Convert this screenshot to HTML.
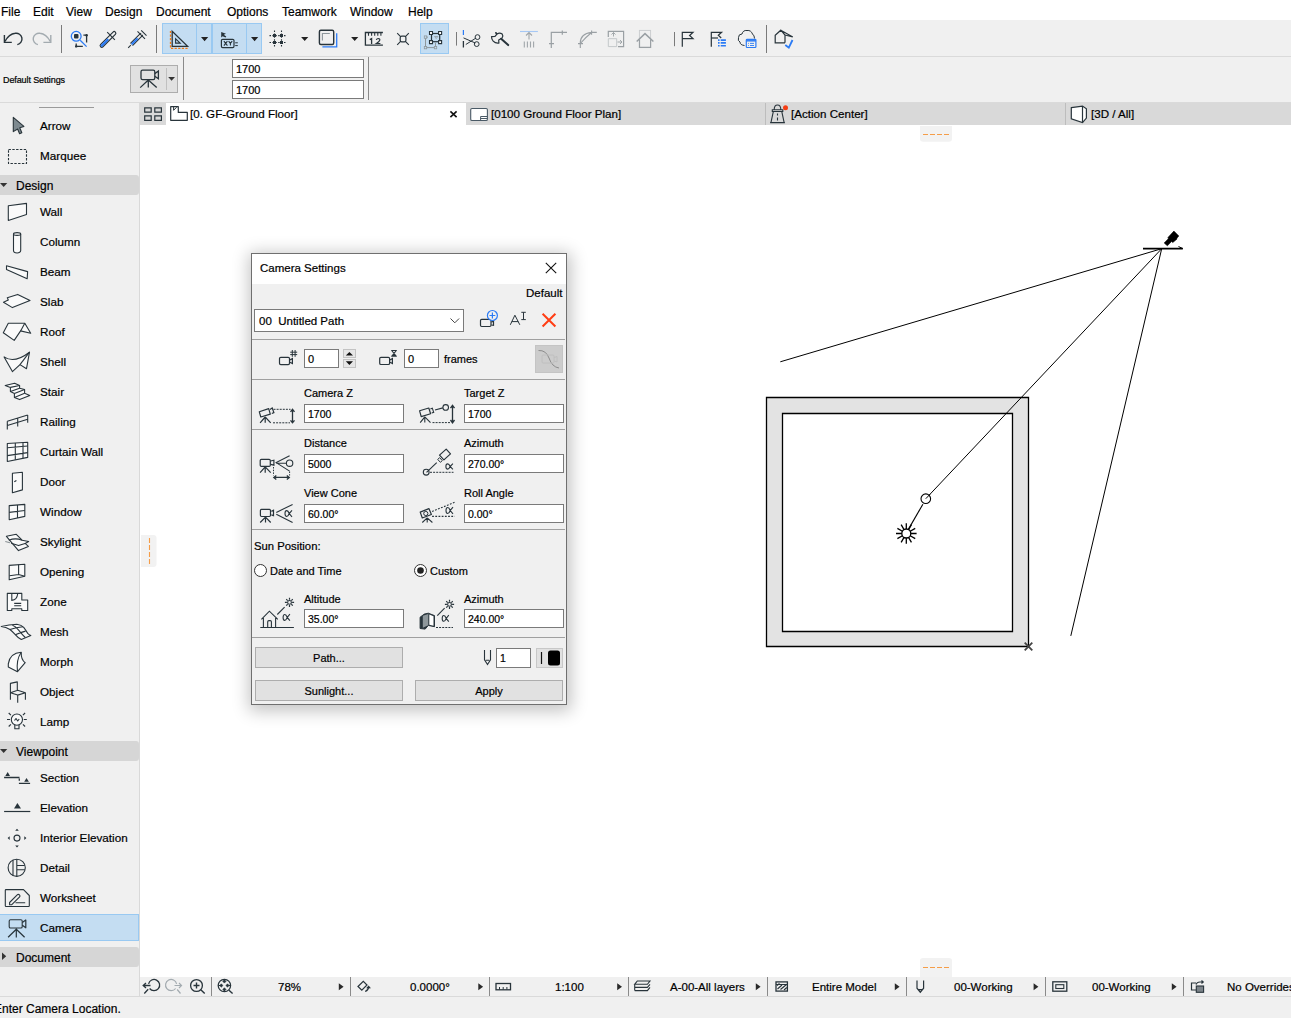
<!DOCTYPE html>
<html><head><meta charset="utf-8">
<style>
*{box-sizing:border-box;margin:0;padding:0}
html,body{width:1291px;height:1018px;overflow:hidden;background:#f0f0f0;font-family:"Liberation Sans",sans-serif;font-size:12px;color:#000;-webkit-text-stroke:0.2px #000}
.a{position:absolute}
.t{position:absolute;white-space:nowrap;line-height:14px}
svg{position:absolute;overflow:visible}
#menu{left:0;top:0;width:1291px;height:20px;background:#fff}
#tb{left:0;top:20px;width:1291px;height:37px;background:#f0f0f0;border-bottom:1px solid #dadada}
#info{left:0;top:57px;width:1291px;height:46px;background:#f0f0f0;border-bottom:1px solid #dadada}
#tool{left:0;top:103px;width:140px;height:893px;background:#f0f0f0;border-right:1px solid #d9d9d9}
#tabs{left:140px;top:103px;width:1151px;height:22px;background:#d9d9d9}
#canvas{left:140px;top:125px;width:1151px;height:852px;background:#fff}
#status{left:140px;top:977px;width:1151px;height:19px;background:#f0f0f0}
#msg{left:0;top:996px;width:1291px;height:22px;background:#f0f0f0;border-top:1px solid #dadada}
.hdr{position:absolute;left:0;width:139px;height:20px;background:#d6d6d6;border-radius:0 3px 3px 0}
.sel{position:absolute;left:0;width:139px;height:27px;background:#c4ddf2;border:1px solid #99c9f2;border-left:none}
.inp{position:absolute;background:#fff;border:1px solid #7a7a7a}
.btn{position:absolute;background:#e1e1e1;border:1px solid #adadad;text-align:center;line-height:21px}
.sep{position:absolute;height:1px;background:#a0a0a0}
</style></head><body>
<div id="menu" class="a">
<span class="t" style="left:1px;top:5px">File</span>
<span class="t" style="left:33px;top:5px">Edit</span>
<span class="t" style="left:66px;top:5px">View</span>
<span class="t" style="left:105px;top:5px">Design</span>
<span class="t" style="left:156px;top:5px">Document</span>
<span class="t" style="left:227px;top:5px">Options</span>
<span class="t" style="left:282px;top:5px">Teamwork</span>
<span class="t" style="left:350px;top:5px">Window</span>
<span class="t" style="left:408px;top:5px">Help</span>
</div>
<div id="tb" class="a"></div>
<div class="a" style="left:162px;top:23px;width:50px;height:31px;background:#c4ddf2;border:1px solid #99c9f2"></div>
<div class="a" style="left:196px;top:23px;width:1px;height:31px;background:#99c9f2"></div>
<div class="a" style="left:211px;top:23px;width:51px;height:31px;background:#c4ddf2;border:1px solid #99c9f2;border-left:2px solid #99c9f2"></div>
<div class="a" style="left:246px;top:23px;width:1px;height:31px;background:#99c9f2"></div>
<div class="a" style="left:420px;top:23px;width:29px;height:31px;background:#c4ddf2;border:1px solid #99c9f2"></div>
<svg class="a" style="left:0;top:0" width="800" height="60" viewBox="0 0 800 60" fill="none" stroke="#28343b" stroke-width="1.2" stroke-linecap="butt">
<!-- separators -->
<path d="M61.5,25V53M156.5,25V53M456.5,32V45.6M674.5,32V46.2M766.5,25V53" stroke="#7a7a7a" stroke-width="1"/>
<!-- undo -->
<path d="M4.4,35V42.4H11.8" stroke-width="1.4"/>
<path d="M5,41.3Q9,34 15.2,33.3A5.7,5.7 0 0 1 17.3,44.6" stroke-width="1.4"/>
<!-- redo -->
<path d="M50.8,35V42.4H43.4" stroke="#a3abb0" stroke-width="1.4"/>
<path d="M50.2,41.3Q46.2,34 40,33.3A5.7,5.7 0 0 0 37.9,44.6" stroke="#a3abb0" stroke-width="1.4"/>
<!-- find element -->
<circle cx="76.2" cy="36.3" r="4.9" stroke="#2b7bf5" stroke-width="1.3"/>
<rect x="74" y="34.1" width="4.5" height="4.5" rx="1" fill="#28343b" stroke="none"/>
<path d="M80.2,40.3L86.6,46.6" stroke="#2b7bf5" stroke-width="1.3"/>
<path d="M83.4,35.2H86.6V42.6M76.2,43.4V46.4H82.8" stroke-width="1.3"/>
<circle cx="86.6" cy="35.2" r="1.2" fill="#28343b" stroke="none"/>
<circle cx="76.2" cy="46.4" r="1.2" fill="#28343b" stroke="none"/>
<!-- eyedropper -->
<path d="M101.8,45.6L114.2,33.2" stroke="#28343b" stroke-width="4.4" stroke-linecap="round"/>
<path d="M101.8,45.6L114.2,33.2" stroke="#f0f0f0" stroke-width="2.1" stroke-linecap="round"/>
<path d="M101.8,45.6L107.6,39.8" stroke="#2b7bf5" stroke-width="2.3" stroke-linecap="round"/>
<path d="M107.2,32.1L114.9,39.8" stroke-width="1.1"/>
<!-- syringe -->
<path d="M128.2,47.8L130.8,45.2" stroke-width="1.1"/>
<path d="M131.5,44.5L141.8,34.2" stroke="#28343b" stroke-width="4" stroke-linecap="butt"/>
<path d="M131.5,44.5L141.8,34.2" stroke="#f0f0f0" stroke-width="1.8" stroke-linecap="butt"/>
<path d="M131.6,44.4L137.6,38.4" stroke="#2b7bf5" stroke-width="2"/>
<path d="M137.5,31.3L145,38.8M141.2,30.3L146.5,35.6" stroke-width="1.1"/>
<!-- triangle ruler -->
<path d="M172.2,31.4V46.4H187.6Z" stroke-width="1.3"/>
<path d="M175.6,38.8V43.1H180.2Z" stroke-width="1.1"/>
<path d="M170.5,30.9V48.4H188" stroke="#f07a14" stroke-width="1.3" stroke-dasharray="2.2,1.4"/>
<path d="M201,37H208.2L204.6,41.2Z M251,37H258.2L254.6,41.2Z M301.1,37.1H308.3L304.7,41.1Z M351.1,37.1H358.3L354.7,41.1Z" fill="#222" stroke="none"/>
<!-- xy -->
<path d="M221.2,32V37.4L222.6,36.2L225.6,37.6L226.3,36.6L223.8,34.8L226,33.8Z" fill="#28343b" stroke="none"/>
<rect x="221.4" y="39.3" width="12.6" height="8.3" rx="1.3" stroke-width="1.2"/>
<path d="M223.9,41.2L227.4,45.6M227.4,41.2L223.9,45.6M228.6,41.2L230.4,43.4L232.2,41.2M230.4,43.4V45.6" stroke-width="1.1"/>
<path d="M235.2,42.8H237.8M235.2,45.6H237.8" stroke-width="1"/>
<!-- grid -->
<path d="M274.5,30.5V47.5M281.5,30.5V47.5M269.5,35.6H286.5M269.5,42.5H286.5" stroke-width="1.1" stroke-dasharray="1.5,1.4"/>
<path d="M273,34.1h3v3h-3zM280,34.1h3v3h-3zM273,41h3v3h-3zM280,41h3v3h-3z" fill="#28343b" stroke="none"/>
<!-- squares -->
<path d="M322.4,46.8H336.7V33.2" stroke="#2b7bf5" stroke-width="1.3"/>
<rect x="319.4" y="30.2" width="14.3" height="14.3" rx="1.5" stroke-width="1.4"/>
<path d="M322.4,40.6V33.5H329.8" stroke="#8e979c" stroke-width="1.1"/>
<!-- ruler -->
<path d="M382.9,32.5H365.4V45.2H382.9" stroke-width="1.3"/>
<path d="M368.5,32.5V35.8M371.6,32.5V35.8M374.7,32.5V35.8M377.8,32.5V35.8M380.9,32.5V35.8" stroke-width="1.1"/>
<path d="M369.8,39.6L371.6,38.6V43.9" stroke-width="1.3"/>
<path d="M376.3,39.9Q376.8,38.5 378.3,38.5Q380,38.6 379.8,40.1Q379.5,41.3 376.4,43.5H380.4" stroke-width="1.2"/>
<!-- x-circle -->
<rect x="400.2" y="36.1" width="5.7" height="5.7" rx="1.6" stroke-width="1.2"/>
<path d="M397.2,33.2L400.6,36.6M408.8,33.2L405.4,36.6M397.2,44.9L400.6,41.4M408.8,44.9L405.4,41.4" stroke-width="1.1"/>
<!-- edit selection -->
<path d="M428,37.1H425.5V47.6H435.5V42.9" stroke="#8e979c" stroke-width="1"/>
<rect x="424.3" y="35.9" width="2.4" height="2.4" fill="#c4ddf2" stroke="#8e979c" stroke-width="0.8"/>
<rect x="424.3" y="46.4" width="2.4" height="2.4" fill="#c4ddf2" stroke="#8e979c" stroke-width="0.8"/>
<rect x="434.3" y="46.4" width="2.4" height="2.4" fill="#c4ddf2" stroke="#8e979c" stroke-width="0.8"/>
<rect x="431.5" y="33.5" width="8.2" height="8.2" stroke-width="1.2"/>
<path d="M429.5,31.5h3v3h-3zM438.6,31.5h3v3h-3zM429.5,40.6h3v3h-3zM438.6,40.6h3v3h-3z" fill="#fff" stroke-width="1.1"/>
<path d="M434.5,36.5L436.2,38.5L437.8,36.5Z" stroke="#8e979c" stroke-width="0.8"/>
<!-- scissors -->
<path d="M463.4,30V35" stroke="#2b7bf5" stroke-width="1.2"/>
<path d="M463.4,41V47.5" stroke-width="1.3"/>
<path d="M463.5,37.9L475.3,43M465.8,44.5L476,38" stroke-width="1"/>
<circle cx="477.5" cy="37.1" r="2.4" stroke-width="1"/>
<circle cx="476.7" cy="44.1" r="2.4" stroke-width="1"/>
<!-- axe -->
<path d="M495.9,32.8L497.1,34Q499.6,32.3 502.2,34.1Q503.6,36 502.1,37.9L498.7,40.1L498.9,43.1Q495.5,43.6 493.2,41.2Q491.4,39 491.5,36.6L495,36.4L497,34" stroke-width="1.2" stroke-linejoin="round"/>
<circle cx="495.9" cy="32.8" r="0.9" fill="#28343b" stroke="none"/>
<path d="M501.1,38.7L508.2,45.1" stroke-width="2" stroke-linecap="round"/>
<!-- elevate (gray) -->
<path d="M520,31.5H537.9" stroke="#a6c8f5" stroke-width="1.1"/>
<path d="M529,32.5V39.5M526,35.5L529,32.5L532,35.5M524.3,41.4V47.6M527.4,41.4V47.6M530.5,41.4V47.6M533.6,41.4V47.6" stroke="#a0a6aa" stroke-width="1.1"/>
<!-- corner -->
<path d="M551.3,48V32.4H567M549,43.6H554M562.3,30.4V34.7" stroke="#9aa0a4" stroke-width="1.2"/>
<!-- fillet -->
<path d="M580.3,48V43Q580.3,33.6 591.6,32.4H596.8M578,43.6H583M591.6,30.4V34.7M580.8,43Q586,37 591,33" stroke="#9aa0a4" stroke-width="1.1"/>
<!-- split -->
<path d="M608.3,36.9V31.3H623.6V46.6H618" stroke="#9aa0a4" stroke-width="1.2"/>
<path d="M608.3,38.7H616.7V46.6H608.3Z" stroke="#c4c8ca" stroke-width="1"/>
<path d="M613.5,36.5V32.5M611.5,34.5L613.5,32.5L615.5,34.5M617.5,42H622M620,40L622,42L620,44" stroke="#9aa0a4" stroke-width="0.9"/>
<!-- house gray -->
<rect x="639.4" y="30.4" width="11.2" height="17.2" stroke="#c8cbcd" stroke-width="0.9"/>
<path d="M636.7,41.5L645,33.6L653.4,41.5" stroke="#9aa0a4" stroke-width="1.5"/>
<path d="M639.5,39.5V47.4H650.6V39.5" stroke="#9aa0a4" stroke-width="1.2"/>
<!-- flag -->
<path d="M682.3,46.7V32.3H693L689.6,35.5L693,38.6H682.3" stroke-width="1.2"/>
<!-- flag list -->
<path d="M711.3,46.7V32.3H721.6L718.3,35.3L721.2,38" stroke-width="1.2"/>
<path d="M711.3,38H718" stroke-width="1.2"/>
<path d="M718,39.3h1.6v1.6h-1.6zM720.7,39.3h5.2v1.6h-5.2zM718,42.1h1.6v1.6h-1.6zM720.7,42.1h5.2v1.6h-5.2zM718,45h1.6v1.6h-1.6zM720.7,45h5.2v1.6h-5.2z" fill="#2b7bf5" stroke="none"/>
<!-- cloud -->
<path d="M744.5,45.5Q740,45 740,42Q737.5,41 738.5,37.5Q738.5,34 742,34Q743,30 747,30.5Q751,30 752.5,34Q754.5,35.5 754.5,38.5" stroke-width="1"/>
<rect x="746.3" y="39.3" width="9.6" height="8.2" rx="0.8" stroke="#2b7bf5" stroke-width="1.2" fill="#f0f0f0"/>
<path d="M746.3,40.8H755.9" stroke="#2b7bf5" stroke-width="1.5"/>
<path d="M748.2,43.4H749M750,43.4H754M748.2,45.5H749M750,45.5H754" stroke="#2b7bf5" stroke-width="0.9"/>
<!-- house check -->
<path d="M785,42.8H775.2V35.2L780.8,30.2L785,35V42.8M780.8,30.2L792.8,37M785,35L792.8,37" stroke-width="1.2"/>
<path d="M785.3,45L788.8,47.7L792.5,40" stroke="#2b7bf5" stroke-width="1.8"/>
</svg>

<div id="info" class="a"></div>
<span class="t" style="left:3px;top:73px;font-size:9px;letter-spacing:-0.1px">Default Settings</span>
<div class="a" style="left:130px;top:65px;width:48px;height:28px;background:#e1e1e1;border:1px solid #adadad"></div>
<div class="a" style="left:166px;top:68px;width:1px;height:22px;background:#c0c0c0"></div>
<div class="a" style="left:183px;top:57px;width:1px;height:43px;background:#8a8a8a"></div>
<div class="a" style="left:368px;top:57px;width:1px;height:43px;background:#8a8a8a"></div>
<div class="inp" style="left:232px;top:59px;width:132px;height:19px"></div>
<div class="inp" style="left:232px;top:80px;width:132px;height:19px"></div>
<span class="t" style="left:236px;top:62px;font-size:11px">1700</span>
<span class="t" style="left:236px;top:83px;font-size:11px">1700</span>
<svg class="a" style="left:0;top:0" width="200" height="100" viewBox="0 0 200 100" fill="none" stroke="#28343b" stroke-width="1.2">
<rect x="141" y="70.2" width="13.8" height="9.5" rx="1.6" stroke-width="1.3"/>
<path d="M154.8,73.6L158.4,71V78.8L154.8,76.2M148.3,79.7V87.6M148.3,80L140.2,87.6M148.3,80L156.7,87.6" stroke-width="1.3"/>
<path d="M168.2,77H175L171.6,80.8Z" fill="#333" stroke="none"/>
</svg>

<div id="tool" class="a">
<div class="a" style="left:39px;top:4px;width:55px;height:1px;background:#9a9a9a"></div>
<div class="hdr" style="top:72px"></div>
<div class="hdr" style="top:638px"></div>
<div class="hdr" style="top:844px"></div>
<div class="sel" style="top:811px"></div>
</div>
<div class="a" style="left:0;top:0">
<span class="t" style="left:16px;top:179px">Design</span>
<span class="t" style="left:16px;top:745px">Viewpoint</span>
<span class="t" style="left:16px;top:951px">Document</span>
<span class="t" style="left:40px;top:119px;font-size:11.7px">Arrow</span>
<span class="t" style="left:40px;top:149px;font-size:11.7px">Marquee</span>
<span class="t" style="left:40px;top:205px;font-size:11.7px">Wall</span>
<span class="t" style="left:40px;top:235px;font-size:11.7px">Column</span>
<span class="t" style="left:40px;top:265px;font-size:11.7px">Beam</span>
<span class="t" style="left:40px;top:295px;font-size:11.7px">Slab</span>
<span class="t" style="left:40px;top:325px;font-size:11.7px">Roof</span>
<span class="t" style="left:40px;top:355px;font-size:11.7px">Shell</span>
<span class="t" style="left:40px;top:385px;font-size:11.7px">Stair</span>
<span class="t" style="left:40px;top:415px;font-size:11.7px">Railing</span>
<span class="t" style="left:40px;top:445px;font-size:11.7px">Curtain Wall</span>
<span class="t" style="left:40px;top:475px;font-size:11.7px">Door</span>
<span class="t" style="left:40px;top:505px;font-size:11.7px">Window</span>
<span class="t" style="left:40px;top:535px;font-size:11.7px">Skylight</span>
<span class="t" style="left:40px;top:565px;font-size:11.7px">Opening</span>
<span class="t" style="left:40px;top:595px;font-size:11.7px">Zone</span>
<span class="t" style="left:40px;top:625px;font-size:11.7px">Mesh</span>
<span class="t" style="left:40px;top:655px;font-size:11.7px">Morph</span>
<span class="t" style="left:40px;top:685px;font-size:11.7px">Object</span>
<span class="t" style="left:40px;top:715px;font-size:11.7px">Lamp</span>
<span class="t" style="left:40px;top:771px;font-size:11.7px">Section</span>
<span class="t" style="left:40px;top:801px;font-size:11.7px">Elevation</span>
<span class="t" style="left:40px;top:831px;font-size:11.7px">Interior Elevation</span>
<span class="t" style="left:40px;top:861px;font-size:11.7px">Detail</span>
<span class="t" style="left:40px;top:891px;font-size:11.7px">Worksheet</span>
<span class="t" style="left:40px;top:921px;font-size:11.7px">Camera</span>
</div>
<svg class="a" style="left:0;top:0" width="140" height="1000" viewBox="0 0 140 1000" fill="none" stroke="#28343b" stroke-width="1.1" stroke-linejoin="round">
<!-- header triangles -->
<path d="M0,183H7.3L3.65,187Z" fill="#333" stroke="none"/>
<path d="M0,749H7.3L3.65,753Z" fill="#333" stroke="none"/>
<path d="M2,952.6V960L6.2,956.3Z" fill="#333" stroke="none"/>
<!-- arrow -->
<path d="M13.3,117.3L23.9,126.4L19.8,127.8L21.8,132.8L19.6,133.8L17.6,129L13.3,131.6Z" fill="#7e8a90" stroke="#2a353b"/>
<!-- marquee -->
<rect x="8.5" y="149.5" width="18" height="14" stroke-dasharray="2.4,1.4"/>
<!-- wall -->
<path d="M8.3,205.8L26.5,203.4V214.5L8.3,220.4Z" fill="#fafafa"/>
<!-- column -->
<path d="M13.5,234V250.5A3.6,2.5 0 0 0 20.7,250.5V234" fill="#fafafa"/>
<ellipse cx="17.1" cy="234" rx="3.6" ry="1.4" fill="#fafafa"/>
<!-- beam -->
<path d="M6.5,265.7L27.6,271.6L27.2,278.7L6.5,269.4Z" fill="#fafafa"/>
<!-- slab -->
<path d="M3.5,302.3L8.3,300L7.3,297.8L17.7,294.4L30,300.6L12.4,307.6Z" fill="#fafafa"/>
<!-- roof -->
<path d="M8.3,323.3H24.8L30.7,333.3L20.6,330.9L14.2,340.4L3.3,332.7Z" fill="#fafafa"/>
<path d="M24.8,323.3L20.6,330.9"/>
<!-- shell -->
<path d="M4.1,356.9Q14,364 29.5,352.2L26.5,368.7L20,364.6L12.4,371.6Z" fill="#fafafa"/>
<path d="M29.5,352.2L20,364.6"/>
<!-- stair -->
<path d="M5.2,385.5L14.6,383.3L19.6,385.5V388.2L24.6,389.5V393.3L29.8,395.4L19.6,399.6L14.4,397.4V393.5L10.4,391.5V387.4Z" fill="#fafafa"/>
<path d="M10.4,387.4L19.6,385.5M10.4,391.5L19.6,388.2M14.4,393.5L24.6,389.5M14.4,397.4L24.6,393.3"/>
<!-- railing -->
<path d="M7.3,421.3L27.7,415M7.3,425.5L27.7,419.3M7.3,421.3V429.5M17.7,418.2V426.5M27.7,415V422.8"/>
<!-- curtain wall -->
<path d="M7.3,443.5L27.7,442.3V457.4L7.3,461.5Z" fill="#fafafa"/>
<path d="M15.3,443V459.8M23,442.5V458.3M7.3,447.8L27.7,446M7.3,455.6L27.7,452.6"/>
<!-- door -->
<path d="M12.4,473.3L22.4,472.2V489.9L12.4,492.8Z" fill="#fafafa"/>
<path d="M14.3,481.7L16.4,480.5"/>
<!-- window -->
<path d="M9.2,505.6L24.8,504.4V516.4L9.2,519.7Z" fill="#fafafa"/>
<path d="M17.5,505V518M9.2,512.4L24.8,510.5"/>
<!-- skylight -->
<path d="M6.4,536.3L16.3,534.3L22.1,540.2L28.7,541.5L25.1,543.4L28.4,546.4L18.5,550.6Z" fill="#fafafa"/>
<path d="M8.8,540.2Q15.5,537.6 22.1,540.2M11.2,543.2L18.5,545.6L25.1,543.4"/>
<path d="M5.3,541.5L10,542.8" stroke="#8a9296"/>
<!-- opening -->
<path d="M9.2,565.4L24.8,564.2V576.2L9.2,579.8Z" fill="#fafafa"/>
<path d="M18.6,564.5V574.5M9.5,575.8L18.6,574.5L24.8,576.2"/>
<!-- zone -->
<path d="M7.3,593.4H21.8V600H27.7V610.5H21.8V608.7H11.8V610.5H7.3Z" fill="#fafafa"/>
<path d="M11.8,593.8V600.4Q17,600 17.7,593.8M14.2,603.4H21.2M14.2,605.7H21.2"/>
<!-- mesh -->
<path d="M1.3,626.5Q9,624.5 16.9,624.3Q21.5,625 23.7,627.4Q26,630.5 27.7,633.4Q29,634.8 30.8,635.5L21.3,639.5Q17.5,637.5 15.3,634.7Q12.5,631.5 10,629.5Q6,627 1.3,626.5Z" fill="#fafafa"/>
<path d="M12.4,625.3Q15.5,626.5 17,628.4Q19.5,631 21.1,633.2Q23,635.5 25.3,637.5M10,629.5Q16,627.5 23,626.8M15.3,634.7Q21,632.5 25.6,631.1"/>
<!-- morph -->
<path d="M21.2,652.3Q10,653 8.3,663.8L8.3,667L17.5,671.7L25.2,662.7Q21,660 21.2,652.3Z" fill="#fafafa"/>
<path d="M21.2,652.3Q16,660 17.5,671.7"/>
<!-- object chair -->
<path d="M10.4,699.8V683.4L17.3,681.9V690.4M10.4,692.7L17.7,690.3L25.4,692.7L17.7,695.1Z M17.7,695.1V702.7M25.4,692.7V699.8"/>
<!-- lamp -->
<circle cx="16.9" cy="719.6" r="5.6" fill="#fafafa"/>
<path d="M14.8,725.1V728.8H19V725.1M14.5,720.5L16,718.5L17.7,721L19.2,719M7,719.5H10M23.8,719.5H26.8M8.7,713L10.9,715.2M25.1,713L22.9,715.2M8.7,726.5L10.9,724.3M25.1,726.5L22.9,724.3"/>
<!-- section -->
<path d="M5.3,775.9H10L7.7,772Z M24.2,781.8H28.9L26.5,777.9Z" fill="#28343b" stroke="none"/>
<path d="M4.1,777.5H19.5M19.3,778.5V780.8M18.9,783.3H30.1" stroke-width="1.3"/>
<!-- elevation -->
<path d="M14,808.6H21L17.4,803.1Z" fill="#28343b" stroke="none"/>
<path d="M4.1,811.5H30.3" stroke-width="1.2"/>
<!-- interior elevation -->
<circle cx="17" cy="838.1" r="3"/>
<path d="M15.2,830.8H18.8L17,828.7Z M15.2,845.4H18.8L17,847.5Z M9.7,836.3V839.9L7.6,838.1Z M24.3,836.3V839.9L26.4,838.1Z" fill="#28343b" stroke="none"/>
<!-- detail -->
<circle cx="16.7" cy="867.8" r="8.6"/>
<path d="M13,859.8V875.8M16.8,859.2V876.4M16.8,865.5H24.8M16.8,869.8H24.8"/>
<!-- worksheet -->
<path d="M6,889.6H23.5L29.3,895.5V905.8Q29.3,906.5 28.6,906.5H6Q5.3,906.5 5.3,905.8V890.3Q5.3,889.6 6,889.6Z"/>
<path d="M9.6,902.5L17.2,894.9Q18.3,893.8 19.4,894.9Q20.5,896 19.4,897.1L11.8,904.7H9.6Z M15.5,902.8H25.2"/>
<!-- camera -->
<rect x="9.2" y="919.7" width="13" height="8.3" rx="1.3"/>
<path d="M22.3,922.5L25.8,920V927.8L22.3,925.3M16.3,928.2V937.5M16.3,929.2L8.1,937.3M16.3,929.2L24.6,937.3" stroke-width="1.2"/>
</svg>

<div id="tabs" class="a"></div>
<div class="a" style="left:166px;top:103px;width:300px;height:22px;background:#fff"></div>
<div class="a" style="left:765px;top:103px;width:1px;height:22px;background:#bdbdbd"></div>
<div class="a" style="left:1065px;top:103px;width:1px;height:22px;background:#bdbdbd"></div>
<span class="t" style="left:190px;top:107px;font-size:11.6px">[0. GF-Ground Floor]</span>
<span class="t" style="left:491px;top:107px;font-size:11.6px">[0100 Ground Floor Plan]</span>
<span class="t" style="left:791px;top:107px;font-size:11.6px">[Action Center]</span>
<span class="t" style="left:1091px;top:107px;font-size:11.6px">[3D / All]</span>
<svg class="a" style="left:0;top:0" width="1291" height="130" viewBox="0 0 1291 130" fill="none" stroke="#28343b" stroke-width="1.1">
<path d="M144.7,107.8h6.5v4.4h-6.5zM154.8,107.8h6.6v4.4h-6.6zM144.7,115.9h6.5v4.4h-6.5zM154.8,115.9h6.6v4.4h-6.6z" stroke-width="1.2"/>
<path d="M170.7,106.7H178.3V112.4H187.3V120.3H170.7Z" stroke-width="1.2" stroke-linejoin="round"/>
<path d="M173.6,107V110.3L176.6,107.2" stroke-width="1"/>
<path d="M450.4,111.4L456.6,117.2M456.6,111.4L450.4,117.2" stroke="#111" stroke-width="1.6"/>
<rect x="470.7" y="108.5" width="16.7" height="12" rx="1.3" fill="#fff" stroke="#4a5a66" stroke-width="1.1"/>
<path d="M480.6,120.5V116.5H487.4M480.6,118.5H487.4" stroke="#4a5a66" stroke-width="1"/>
<path d="M774.2,109.6Q774.2,105 777.5,105Q780.8,105 780.8,109.6M772.3,109.7H782.8V111.5H772.3ZM773.3,111.6L771,122.4M781.8,111.6L784.1,122.4M770.1,122.6H784.9M777.5,113.5V115.5M777.5,117.5V120.5" stroke-width="1.1"/>
<circle cx="785.5" cy="107.7" r="2.5" fill="#f43d14" stroke="none"/>
<path d="M1071.3,107.7L1082.5,106.1L1086.4,108.8V118.1L1082.5,122.6L1071.3,118.9Z" fill="#fff" stroke-width="1.2"/>
<path d="M1082.5,106.1V122.6" stroke-width="1.2"/>
</svg>

<div id="canvas" class="a"></div>
<svg class="a" style="left:0;top:0" width="1291" height="1018" viewBox="0 0 1291 1018" fill="none" stroke="#000">
<!-- markers -->
<path d="M920,126H952V138.5Q952,141.7 948.8,141.7H923.2Q920,141.7 920,138.5Z" fill="#f2f2f2" stroke="none"/>
<path d="M923,134.5H950" stroke="#f59d48" stroke-width="1.1" stroke-dasharray="5,2"/>
<path d="M920,960.5Q920,958 923,958H949Q952,958 952,960.5V977H920Z" fill="#f2f2f2" stroke="none"/>
<path d="M923,967.5H950" stroke="#f59d48" stroke-width="1.1" stroke-dasharray="5,2"/>
<path d="M141,535H153.5Q156.5,535 156.5,538V564Q156.5,567 153.5,567H141Z" fill="#f2f2f2" stroke="none"/>
<path d="M149.5,538V565" stroke="#f59d48" stroke-width="1.1" stroke-dasharray="5,2"/>
<!-- walls -->
<path fill-rule="evenodd" d="M766.5,397.5H1028.5V646.5H766.5Z M782.5,413.5H1012.5V631.5H782.5Z" fill="#e3e3e3" stroke="#000" stroke-width="1.3"/>
<path d="M1024.7,642.7L1032.3,650.3M1032.3,642.7L1024.7,650.3" stroke="#444" stroke-width="1.8"/>
<!-- camera lines -->
<path d="M1161.7,248.7L780.3,361.8M1161.7,248.7L925.8,498.7M1161.7,248.7L1070.8,635.9" stroke-width="1"/>
<path d="M1143,248.6H1182.8" stroke-width="1.6"/>
<path d="M1178.5,246.5L1182.8,248.6" stroke-width="1"/>
<path d="M1168,237.4L1173.9,231.1L1178.8,236L1176.8,238.2L1177,239L1172.8,242.5L1171.5,241.5L1167.4,245.8L1164.2,243L1168.3,238.8Z" fill="#000" stroke="#000" stroke-width="0.6"/>
<circle cx="925.8" cy="498.7" r="4.8" fill="#fff" stroke-width="1.1"/>
<path d="M925.8,498.7L930,494.3" stroke-width="1"/>
<path d="M922.9,504.2L908.5,529.1" stroke-width="1.1"/>
<circle cx="906.3" cy="533.5" r="4.5" fill="#fff" stroke-width="1.3"/>
<path d="M910.80,533.50L916.60,533.50M910.20,535.75L915.22,538.65M908.55,537.40L911.45,542.42M906.30,538.00L906.30,543.80M904.05,537.40L901.15,542.42M902.40,535.75L897.38,538.65M901.80,533.50L896.00,533.50M902.40,531.25L897.38,528.35M904.05,529.60L901.15,524.58M906.30,529.00L906.30,523.20M908.55,529.60L911.45,524.58M910.20,531.25L915.22,528.35" stroke-width="1.3"/>
</svg>

<div id="status" class="a"></div>
<span class="t" style="left:278px;top:980px;font-size:11.5px">78%</span>
<span class="t" style="left:410px;top:980px;font-size:11.5px">0.0000°</span>
<span class="t" style="left:555px;top:980px;font-size:11.5px">1:100</span>
<span class="t" style="left:670px;top:980px;font-size:11.5px">A-00-All layers</span>
<span class="t" style="left:812px;top:980px;font-size:11.5px">Entire Model</span>
<span class="t" style="left:954px;top:980px;font-size:11.5px">00-Working</span>
<span class="t" style="left:1092px;top:980px;font-size:11.5px">00-Working</span>
<span class="t" style="left:1227px;top:980px;font-size:11.5px">No Overrides</span>
<svg class="a" style="left:0;top:970px" width="1291" height="30" viewBox="0 970 1291 30" fill="none" stroke="#28343b" stroke-width="1.2">
<path d="M211.5,977V996M350.5,977V996M489.5,977V996M628.5,977V996M767.5,977V996M906.5,977V996M1045.5,977V996M1183.5,977V996" stroke="#8a8a8a" stroke-width="1"/>
<path d="M338.8,983.2V990.2L343.6,986.7Z M478.3,983.2V990.2L483.1,986.7Z M617.2,983.2V990.2L622,986.7Z M755.8,983.2V990.2L760.6,986.7Z M894.8,983.2V990.2L899.6,986.7Z M1033.6,983.2V990.2L1038.4,986.7Z M1171.8,983.2V990.2L1176.6,986.7Z" fill="#2a2a2a" stroke="none"/>
<!-- zoom back -->
<path d="M149.6,988.5A5.6,5.6 0 1 0 148.6,983.8" stroke-width="1.3"/>
<path d="M143.2,985.5H150.5M146,983L143.2,985.5L146,988" stroke-width="1.3"/>
<path d="M148.2,989.3L144.3,993.5" stroke-width="1.3"/>
<!-- zoom fwd gray -->
<path d="M175.6,988.5A5.6,5.6 0 1 1 176.6,983.8" stroke="#a3abb0" stroke-width="1.2"/>
<path d="M174.5,985.5H181.5M179,983L181.5,985.5L179,988M177.2,989.5L180.5,993.5" stroke="#a3abb0" stroke-width="1.2"/>
<!-- zoom in -->
<circle cx="196.5" cy="985.5" r="5.9" stroke-width="1.3"/>
<path d="M196.5,982.5V988.5M193.5,985.5H199.5M200.8,989.8L204.7,993.6" stroke-width="1.4"/>
<!-- fit -->
<circle cx="224.4" cy="985.5" r="6.2" stroke-width="1.3"/>
<path d="M229,990.2L232.6,993.6" stroke-width="1.4"/>
<path d="M222.70000000000002,981.4L224.4,979.6999999999999L226.1,981.4L224.4,983.1ZM219.60000000000002,985.5L221.3,983.8L223.0,985.5L221.3,987.2ZM225.8,985.5L227.5,983.8L229.2,985.5L227.5,987.2ZM222.70000000000002,989.4L224.4,987.6999999999999L226.1,989.4L224.4,991.1Z" fill="#28343b" stroke="#28343b" stroke-width="0.5"/><path d="M224.4,979.5V981M224.4,990V991.5M218.4,985.5H220M228.8,985.5H230.4" stroke-width="1.2"/>
<!-- rotate -->
<path d="M358,986.5L363.3,981.3L367,985L361.8,990.2Z" stroke-width="1.2"/>
<path d="M365.2,991.5Q368.5,990 368.6,987" stroke-width="1.3"/>
<path d="M366.8,988.3L368.6,986.3L370.3,988.3" stroke-width="1.2"/>
<!-- ruler -->
<rect x="496" y="983.5" width="14.5" height="6.3" stroke-width="1.3"/>
<path d="M499.5,989.5V987M503.2,989.5V987M506.9,989.5V987" stroke-width="1"/>
<!-- layers -->
<path d="M637.3,981H650L647.4,984.3H634.7Z" stroke-width="1.1"/>
<path d="M634.7,987.4H647.4L650,984.3M634.7,990.6H647.4L650,987.4M634.7,984.3V990.6" stroke-width="1.1"/>
<!-- entire model -->
<rect x="776" y="981.9" width="11.4" height="9.2" stroke-width="1.3"/>
<path d="M777,985.5L779.5,983.5M777.5,989L782,985M780.5,989.5L786.5,984.5M784,990L786.8,987.5M776,984.5H787.4" stroke-width="1.1"/>
<!-- pen -->
<path d="M917,980.6V988.2L920.3,992.2L923.6,988.2V980.6M918.5,989.7H922" stroke-width="1.2"/>
<!-- layer comb -->
<rect x="1052.8" y="981.8" width="14" height="9.4" stroke-width="1.3"/>
<rect x="1055.8" y="984.7" width="8" height="3.8" stroke-width="1.1"/>
<!-- overrides -->
<path d="M1196,983H1191.5V990H1196" stroke-width="1.2"/>
<rect x="1196.3" y="986" width="7.3" height="6.3" fill="#7c848a" stroke-width="1.1"/>
<path d="M1196,984.5Q1197,981.5 1201,982L1203,982M1201.5,980.5L1203.3,982L1201.5,983.5" stroke-width="1.1"/>
</svg>

<div id="msg" class="a"><span class="t" style="left:-6px;top:5px;font-size:12px">Enter Camera Location.</span></div>

<!-- DIALOG -->
<div class="a" style="left:251px;top:253px;width:316px;height:452px;background:#f0f0f0;border:1px solid #6f6f6f;box-shadow:1px 3px 16px 3px rgba(0,0,0,0.24)"></div>
<div class="a" style="left:252px;top:254px;width:314px;height:30px;background:#fff"></div>
<div id="dlg" style="font-size:11px">
<span class="t" style="left:260px;top:261px;font-size:11.5px">Camera Settings</span>
<span class="t" style="left:526px;top:286px;font-size:11.5px">Default</span>
<div class="inp" style="left:254px;top:309px;width:210px;height:23px"></div>
<span class="t" style="left:259px;top:314px;font-size:11.5px;white-space:pre">00  Untitled Path</span>
<div class="sep" style="left:252px;top:339px;width:313px"></div>
<div class="inp" style="left:304px;top:349px;width:35px;height:19px"></div>
<span class="t" style="left:308px;top:352px;font-size:11px">0</span>
<div class="a" style="left:343px;top:349px;width:13px;height:9px;background:#e6e6e6;border:1px solid #c3c3c3"></div>
<div class="a" style="left:343px;top:359px;width:13px;height:9px;background:#e6e6e6;border:1px solid #c3c3c3"></div>
<div class="inp" style="left:404px;top:349px;width:35px;height:19px"></div>
<span class="t" style="left:408px;top:352px;font-size:11px">0</span>
<span class="t" style="left:444px;top:352px;font-size:11px">frames</span>
<div class="a" style="left:535px;top:345px;width:28px;height:28px;background:#cccccc;border:1px solid #c4c4c4"></div>
<div class="sep" style="left:252px;top:379px;width:313px"></div>
<span class="t" style="left:304px;top:386px">Camera Z</span>
<span class="t" style="left:464px;top:386px">Target Z</span>
<div class="inp" style="left:304px;top:404px;width:100px;height:19px"></div>
<div class="inp" style="left:464px;top:404px;width:100px;height:19px"></div>
<span class="t" style="left:308px;top:407px;font-size:10.5px">1700</span>
<span class="t" style="left:468px;top:407px;font-size:10.5px">1700</span>
<div class="sep" style="left:252px;top:429px;width:313px"></div>
<span class="t" style="left:304px;top:436px">Distance</span>
<span class="t" style="left:464px;top:436px">Azimuth</span>
<div class="inp" style="left:304px;top:454px;width:100px;height:19px"></div>
<div class="inp" style="left:464px;top:454px;width:100px;height:19px"></div>
<span class="t" style="left:308px;top:457px;font-size:10.5px">5000</span>
<span class="t" style="left:468px;top:457px;font-size:10.5px">270.00°</span>
<span class="t" style="left:304px;top:486px">View Cone</span>
<span class="t" style="left:464px;top:486px">Roll Angle</span>
<div class="inp" style="left:304px;top:504px;width:100px;height:19px"></div>
<div class="inp" style="left:464px;top:504px;width:100px;height:19px"></div>
<span class="t" style="left:308px;top:507px;font-size:10.5px">60.00°</span>
<span class="t" style="left:468px;top:507px;font-size:10.5px">0.00°</span>
<div class="sep" style="left:252px;top:529px;width:313px"></div>
<span class="t" style="left:254px;top:539px;font-size:11.3px">Sun Position:</span>
<span class="t" style="left:270px;top:564px">Date and Time</span>
<span class="t" style="left:430px;top:564px">Custom</span>
<span class="t" style="left:304px;top:592px">Altitude</span>
<span class="t" style="left:464px;top:592px">Azimuth</span>
<div class="inp" style="left:304px;top:609px;width:100px;height:19px"></div>
<div class="inp" style="left:464px;top:609px;width:100px;height:19px"></div>
<span class="t" style="left:308px;top:612px;font-size:10.5px">35.00°</span>
<span class="t" style="left:468px;top:612px;font-size:10.5px">240.00°</span>
<div class="sep" style="left:252px;top:637px;width:313px"></div>
<div class="btn" style="left:255px;top:647px;width:148px;height:21px">Path...</div>
<div class="inp" style="left:496px;top:648px;width:35px;height:20px"></div>
<span class="t" style="left:500px;top:651px;font-size:10.5px">1</span>
<div class="a" style="left:536px;top:648px;width:27px;height:20px;background:#e1e1e1;border:1px solid #c8c8c8"></div>
<div class="btn" style="left:255px;top:680px;width:148px;height:21px">Sunlight...</div>
<div class="btn" style="left:415px;top:680px;width:148px;height:21px">Apply</div>
</div>
<svg class="a" style="left:0;top:0" width="1291" height="1018" viewBox="0 0 1291 1018" fill="none" stroke="#28343b" stroke-width="1.2">
<!-- close -->
<path d="M545.8,262.8L556.2,273.2M556.2,262.8L545.8,273.2" stroke="#111" stroke-width="1.1"/>
<!-- chevron -->
<path d="M450.5,318.5L454.8,322.8L459.1,318.5" stroke="#444" stroke-width="1"/>
<!-- add cam -->
<rect x="480.5" y="319.3" width="10.5" height="7.2" rx="1.2" stroke-width="1.2"/>
<path d="M491.3,322L493.5,321.4V325.4L491.3,325" stroke-width="1.2"/>
<circle cx="492.4" cy="315.5" r="5" fill="#f0f0f0" stroke="#2b7bf5" stroke-width="1.2"/>
<path d="M492.4,312.6V318.4M489.5,315.5H495.3" stroke="#2b7bf5" stroke-width="1.2"/>
<!-- A I -->
<path d="M510.3,324.8L514.9,315.2L519.8,324.8M511.8,321.6H518.3" stroke-width="1"/>
<path d="M521.3,312.3H525.8M521.3,319.6H525.8M523.5,312.3V319.6" stroke-width="1"/>
<!-- red x -->
<path d="M542.6,313.7L555.4,326.5M555.4,313.7L542.6,326.5" stroke="#ff3d14" stroke-width="2"/>
<!-- cam # -->
<rect x="279.5" y="357.3" width="10" height="7.3" rx="1.3" stroke-width="1.2"/>
<path d="M289.8,360L292.4,358.6V363.6L289.8,362.3" stroke-width="1.2"/>
<path d="M292.3,350V356.8M295.1,350V356.8M290.2,352.2H297.2M290.2,354.6H297.2" stroke-width="1"/>
<!-- spinner arrows -->
<path d="M345.8,355.6H353L349.4,351.9Z M345.8,361.2H353L349.4,364.9Z" fill="#111" stroke="none"/>
<!-- cam hourglass -->
<rect x="379.7" y="357.3" width="9.9" height="7.2" rx="1.3" stroke-width="1.2"/>
<path d="M389.9,360L392.4,358.6V363.6L389.9,362.3" stroke-width="1.2"/>
<path d="M391.2,350.5H396.8M391.2,356.3H396.8M391.7,350.5L396.3,356.3M396.3,350.5L391.7,356.3" stroke-width="1.1"/>
<path d="M392,356L394,353.5L396,356Z" fill="#28343b" stroke="none"/>
<!-- gray curve button -->
<path d="M538.5,350.5Q546,350 549,358Q552,367 559,368" stroke="#8c8c8c" stroke-width="1"/>
<rect x="542" y="355" width="12" height="8" rx="1" stroke="#bdbdbd" stroke-width="0.9"/>
<path d="M554.2,357.5L557,356.5V362L554.2,361" stroke="#bdbdbd" stroke-width="0.9"/>
<!-- camera Z icon -->
<path d="M259.3,411.8L268.7,408.6L270.3,414.1L260.8,417Z" stroke-width="1.2" stroke-linejoin="round"/>
<path d="M270,409.5L272.2,408L273.9,412.6L271.8,413.5" stroke-width="1.2"/>
<path d="M265.2,416.8V422.8M265.2,417L260.1,422.8M265.2,417L270.7,422.8" stroke-width="1.2"/>
<path d="M273.5,409.3H290.5M273,422.8H290" stroke-width="1" stroke-dasharray="2,1.1"/>
<path d="M292.5,410V422M290.5,411.8L292.5,409.3L294.5,411.8M290.5,420.3L292.5,422.8L294.5,420.3" stroke-width="1.3"/>
<!-- target Z icon -->
<path d="M419.6,410.8L428.8,408L430.6,413.7L421.2,416.6Z" stroke-width="1.2" stroke-linejoin="round"/>
<path d="M430.4,409L432.3,408.2L433.7,412.4L431.7,413" stroke-width="1.1"/>
<path d="M424.8,416.5V422.6M424.8,416.8L420.2,422.7M424.8,416.8L430.5,422.7" stroke-width="1.1"/>
<path d="M435,410L442.8,407.9" stroke-width="1.1"/>
<circle cx="445.7" cy="407.4" r="2.8" stroke-width="1.1"/>
<path d="M432.5,422.6H450.5" stroke-width="1" stroke-dasharray="2,1.1"/>
<path d="M452.5,406V422M450.5,408.2L452.5,405.3L454.5,408.2M450.5,420L452.5,422.8L454.5,420" stroke-width="1.3"/>
<!-- distance icon -->
<rect x="260.2" y="459.4" width="10.1" height="7" rx="1.2" stroke-width="1.2"/>
<path d="M270.7,461L273.9,460.2V465.2L270.7,464.4" stroke-width="1.2"/>
<path d="M265.2,466.6V472.7M265.2,466.8L260.1,472.7M265.2,466.8L270.7,472.7" stroke-width="1.2"/>
<path d="M289.6,455.8L276.2,462.6L289.6,471.1M276.2,463.2H286.3" stroke-width="1.1"/>
<circle cx="289.6" cy="463.2" r="3.2" stroke-width="1.1"/>
<path d="M273.5,467V475.5M289.6,471.5V475.5" stroke-width="1" stroke-dasharray="1.5,1.2"/>
<path d="M274,477.4H289M276.3,475.4L273.8,477.4L276.3,479.4M286.8,475.4L289.3,477.4L286.8,479.4" stroke-width="1.3"/>
<!-- azimuth icon -->
<circle cx="426.2" cy="472.2" r="2.9" stroke-width="1.1"/>
<path d="M426.5,472.4L436.7,462.6" stroke-width="1.1"/>
<path d="M450.5,453.9L446.2,449.1L439.5,455.1L443.9,459.9Z" stroke-width="1.2" stroke-linejoin="round"/>
<path d="M442.3,460.6L439.6,457.7L437.7,459.4L440.4,462.3Z" stroke-width="1"/>
<path d="M430,472.3H453.5" stroke-width="1" stroke-dasharray="2,1.1"/>
<path d="M452.90,463.60L450.10,466.50Q449.05,469.11 447.65,469.11Q445.90,469.11 445.90,466.50Q445.90,463.89 447.65,463.89Q449.05,463.89 450.10,466.50L452.90,469.40" stroke-width="1.1"/>
<!-- view cone icon -->
<rect x="260.4" y="509.4" width="10.1" height="7.1" rx="1.2" stroke-width="1.2"/>
<path d="M271.4,511.4L273.5,510.3V515.6L271.4,514.9" stroke-width="1.2"/>
<path d="M265.5,517V522.5M265.5,517.2L260.2,522.5M265.5,517.2L270.7,522.5" stroke-width="1.2"/>
<path d="M292.6,504.4L276.3,512.4M276.3,514.3L292.6,522.5" stroke-width="1.1"/>
<path d="M292.00,510.30L289.20,513.55Q288.15,516.47 286.75,516.47Q285.00,516.47 285.00,513.55Q285.00,510.62 286.75,510.62Q288.15,510.62 289.20,513.55L292.00,516.80" stroke-width="1.1"/>
<!-- roll angle icon -->
<path d="M420.2,512.1L428.9,508.6L431.4,514.5L422.3,518Z" stroke-width="1.2" stroke-linejoin="round"/>
<circle cx="425.8" cy="513.5" r="2.1" stroke-width="1"/>
<path d="M427.2,517.7V522.5M427.2,517.9L422.3,522.5M427.2,517.9L432.4,522.5" stroke-width="1.1"/>
<path d="M432.1,511.4L454.7,502.3M432.1,516.4H454.7" stroke-width="1.1" stroke-dasharray="1.8,1.4"/>
<path d="M453.00,507.20L450.20,510.50Q449.15,513.47 447.75,513.47Q446.00,513.47 446.00,510.50Q446.00,507.53 447.75,507.53Q449.15,507.53 450.20,510.50L453.00,513.80" stroke-width="1.1"/>
<!-- radio -->
<circle cx="260.5" cy="570.5" r="6" fill="#fff" stroke="#333" stroke-width="1"/>
<circle cx="420.5" cy="570.5" r="6" fill="#fff" stroke="#333" stroke-width="1"/>
<circle cx="420.5" cy="570.5" r="3.3" fill="#222" stroke="none"/>
<!-- altitude icon -->
<path d="M261.4,619.4L269.4,611.2L277.8,619.4M263.4,617.9V627.4M275.6,617.9V627.4M267.7,627.4V621.8Q267.7,620.6 268.9,620.6H270.2Q271.4,620.6 271.4,621.8V627.4M260.3,627.5H293.9" stroke-width="1.1"/>
<path d="M277.3,614.5L284.6,607.2" stroke-width="1.1"/>
<circle cx="289.5" cy="602.4" r="1.9" stroke-width="1.1"/>
<path d="M292.10,602.40L294.10,602.40M291.34,604.24L292.75,605.65M289.50,605.00L289.50,607.00M287.66,604.24L286.25,605.65M286.90,602.40L284.90,602.40M287.66,600.56L286.25,599.15M289.50,599.80L289.50,597.80M291.34,600.56L292.75,599.15" stroke-width="1.2"/>
<path d="M289.90,614.10L287.18,617.40Q286.16,620.37 284.80,620.37Q283.10,620.37 283.10,617.40Q283.10,614.43 284.80,614.43Q286.16,614.43 287.18,617.40L289.90,620.70" stroke-width="1.1"/>
<!-- sun azimuth icon -->
<path d="M420.1,617.2L424.3,614.1L428.3,613.2L434.5,615.6V626.7L428.3,625.4L425.2,629.1L420.1,628.5Z" fill="#28343b" stroke="#28343b" stroke-width="1"/>
<path d="M422.8,615.8L428.3,614.1V625.3L422.8,627.8Z" fill="#8e979b" stroke="none"/>
<path d="M429.3,614.5L433.5,616.3V625.8L429.3,624.8Z" fill="#fff" stroke="none"/>
<path d="M437.3,615.6L444.6,608.1" stroke-width="1.1"/>
<circle cx="449.5" cy="604.4" r="1.9" stroke-width="1.1"/>
<path d="M452.10,604.40L454.10,604.40M451.34,606.24L452.75,607.65M449.50,607.00L449.50,609.00M447.66,606.24L446.25,607.65M446.90,604.40L444.90,604.40M447.66,602.56L446.25,601.15M449.50,601.80L449.50,599.80M451.34,602.56L452.75,601.15" stroke-width="1.2"/>
<path d="M436,627.5H453" stroke-width="1" stroke-dasharray="2,1.1"/>
<path d="M448.80,615.20L446.16,618.40Q445.17,621.28 443.85,621.28Q442.20,621.28 442.20,618.40Q442.20,615.52 443.85,615.52Q445.17,615.52 446.16,618.40L448.80,621.60" stroke-width="1.1"/>
<!-- pen icon -->
<path d="M484.5,650V659.8L487.5,664.5L490.5,659.8V650M485.8,660.3H489.2" stroke-width="1.1"/>
<!-- swatch -->
<path d="M541.5,652V664" stroke="#111" stroke-width="1.2"/>
<rect x="548" y="650.5" width="12" height="15" rx="2.5" fill="#000" stroke="none"/>
</svg>
</body></html>
